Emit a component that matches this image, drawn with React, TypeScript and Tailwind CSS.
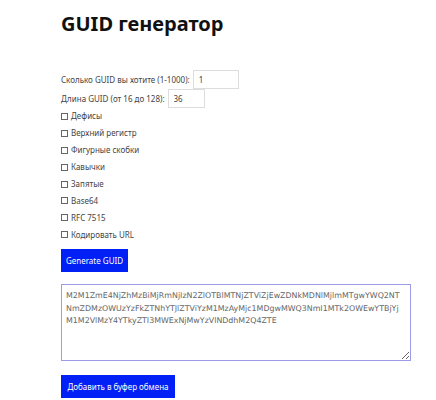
import { useState } from 'react';

const options = [
  'Дефисы',
  'Верхний регистр',
  'Фигурные скобки',
  'Кавычки',
  'Запятые',
  'Base64',
  'RFC 7515',
  'Кодировать URL',
];

const sample =
  'M2M1ZmE4NjZhMzBiMjRmNjIzN2ZlOTBlMTNjZTViZjEwZDNkMDNlMjlmMTgwYWQ2NTNmZDMzOWUzYzFkZTNhYTJlZTViYzM1MzAyMjc1MDgwMWQ3NmI1MTk2OWEwYTBjYjM1M2VlMzY4YTkyZTI3MWExNjMwYzVlNDdhM2Q4ZTE';

const App = () => {
  const [count, setCount] = useState('1');
  const [length, setLength] = useState('36');
  const [checked, setChecked] = useState<Record<string, boolean>>({});
  const [output, setOutput] = useState(sample);

  return (
    <div className="min-h-[400px] bg-white pl-[61px] pt-[11px] text-[#444] [font-family:'Noto_Sans',sans-serif]">
      <h1 className="text-[20px] font-bold leading-[26px] text-[#111]">GUID генератор</h1>

      <div className="mt-[33px] flex items-center text-[8px]">
        <span>Сколько GUID вы хотите (1-1000):</span>
        <input
          value={count}
          onChange={(e) => setCount(e.target.value)}
          className="ml-[3px] h-[19px] w-[46px] border border-[#ddd] px-[5px] text-[8px] outline-none"
        />
      </div>
      <div className="flex items-center text-[8px]">
        <span>Длина GUID (от 16 до 128):</span>
        <input
          value={length}
          onChange={(e) => setLength(e.target.value)}
          className="ml-[3px] h-[19px] w-[37px] border border-[#ddd] px-[5px] text-[8px] outline-none"
        />
      </div>

      <div className="flex flex-col">
        {options.map((label) => (
          <label key={label} className="flex h-[16.9px] items-center text-[8px]">
            <input
              type="checkbox"
              checked={!!checked[label]}
              onChange={(e) => setChecked({ ...checked, [label]: e.target.checked })}
              className="m-0 mr-[3px] h-[7px] w-[7px] appearance-none border border-[#666] bg-white checked:bg-[#0020f5]"
            />
            {label}
          </label>
        ))}
      </div>

      <button
        onClick={() => setOutput(sample)}
        className="mt-[6px] h-[23px] w-[67px] bg-[#0020f5] text-[8px] text-white"
      >
        Generate GUID
      </button>

      <textarea
        value={output}
        onChange={(e) => setOutput(e.target.value)}
        className="mt-[12px] block h-[77px] w-[350px] resize-y break-all border border-[#9b9be8] py-[5px] pl-[4px] pr-[7px] text-[7.9px] leading-[12.5px] text-[#666] outline-none [font-family:'DejaVu_Sans',sans-serif]"
      />

      <button className="mt-[14px] h-[23px] w-[114px] bg-[#0020f5] text-[8px] text-white">
        Добавить в буфер обмена
      </button>
    </div>
  );
};

export default App;
